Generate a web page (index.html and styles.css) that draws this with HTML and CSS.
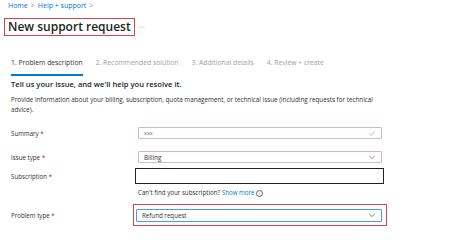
FILE: index.html
```html
<!DOCTYPE html>
<html lang="en">
<head>
    <meta charset="UTF-8">
    <meta name="viewport" content="width=device-width, initial-scale=1.0">
    <title>New support request</title>
    <link rel="stylesheet" href="styles.css">
</head>
<body>
    <nav class="breadcrumb">
        <a href="#">Home</a>
        <span class="sep">&gt;</span>
        <a href="#">Help + support</a>
        <span class="sep">&gt;</span>
    </nav>

    <div class="title-row">
        <h1 class="page-title">New support request</h1>
        <span class="more">&middot;&middot;&middot;</span>
    </div>

    <div class="tabs">
        <div class="tab active">1. Problem description</div>
        <div class="tab">2. Recommended solution</div>
        <div class="tab">3. Additional details</div>
        <div class="tab">4. Review + create</div>
    </div>

    <h2 class="intro-title">Tell us your issue, and we'll help you resolve it.</h2>
    <p class="intro-text">Provide information about your billing, subscription, quota management, or technical issue (including requests for technical advice).</p>

    <div class="form">
        <div class="form-row row-summary">
            <label>Summary <span class="req">*</span></label>
            <div class="field filled">
                <span class="value small">xxx</span>
                <svg class="icon" viewBox="0 0 10 10" width="8" height="8"><path d="M1.5 5.5 L4 8 L8.5 2.5" fill="none" stroke="#8cc08c" stroke-width="1"/></svg>
            </div>
        </div>
        <div class="form-row row-issue">
            <label>Issue type <span class="req">*</span></label>
            <div class="field filled">
                <span class="value">Billing</span>
                <svg class="icon" viewBox="0 0 10 10" width="8" height="8"><path d="M1.5 3.5 L5 7 L8.5 3.5" fill="none" stroke="#666" stroke-width="0.9"/></svg>
            </div>
        </div>
        <div class="form-row row-sub">
            <label>Subscription <span class="req">*</span></label>
            <div class="field focus"></div>
        </div>
        <div class="help-line">Can't find your subscription? <a href="#">Show more</a> <span class="info">i</span></div>
        <div class="form-row row-problem">
            <label>Problem type <span class="req">*</span></label>
            <div class="highlight">
                <div class="field active">
                    <span class="value">Refund request</span>
                    <svg class="icon" viewBox="0 0 10 10" width="8" height="8"><path d="M1.5 3.5 L5 7 L8.5 3.5" fill="none" stroke="#444" stroke-width="0.9"/></svg>
                </div>
            </div>
        </div>
    </div>
</body>
</html>
```

FILE: styles.css
```css
body {
    margin: 0;
    font-family: "Open Sans", "Noto Sans", sans-serif;
    color: #323130;
    background: #fff;
}

a {
    color: #0078d4;
    text-decoration: none;
}

.breadcrumb {
    padding: 1px 8px 0;
    font-size: 7px;
    line-height: 10px;
    display: flex;
    gap: 3px;
}

.breadcrumb .sep {
    color: #8a8886;
}

.title-row {
    display: flex;
    align-items: center;
    margin-top: 7px;
    padding-left: 4px;
}

.page-title {
    margin: 0;
    font-size: 12px;
    font-weight: 600;
    line-height: 16px;
    padding: 0 3px 0 3px;
    border: 1px solid #d9434b;
    color: #201f1e;
}

.more {
    margin-left: 4px;
    font-size: 7px;
    color: #8a8886;
    letter-spacing: 0.3px;
}

.tabs {
    display: flex;
    gap: 13px;
    margin-top: 22px;
    padding-left: 11px;
    font-size: 6.8px;
}

.tab {
    color: #a19f9d;
    padding-bottom: 7px;
    border-bottom: 2px solid transparent;
}

.tab.active {
    color: #323130;
    border-bottom-color: #0078d4;
}

.intro-title {
    margin: 3px 0 0 11px;
    font-size: 7.6px;
    font-weight: 600;
    color: #201f1e;
}

.intro-text {
    margin: 6px 0 0 11px;
    width: 362px;
    font-size: 6.3px;
    line-height: 10px;
}

.form {
    margin-top: 12px;
}

.form-row {
    display: grid;
    grid-template-columns: 126px 245px;
    align-items: center;
    padding-left: 11px;
}

.form-row label {
    font-size: 6.2px;
}

.req {
    color: #a4262c;
}

.field {
    height: 10px;
    border: 1px solid #d5b4dc;
    border-radius: 1px;
    display: flex;
    align-items: center;
    justify-content: space-between;
    padding: 0 5px 0 5px;
    font-size: 6.2px;
    margin-left: 1px;
}

.value.small {
    font-size: 5.5px;
    color: #605e5c;
}

.row-issue {
    margin-top: 12px;
}

.row-sub {
    margin-top: 5px;
}

.field.focus {
    height: 14px;
    border: 1.5px solid #252423;
    border-radius: 0;
    margin-left: -2px;
    margin-right: -2px;
}

.help-line {
    margin: 4px 0 0 138px;
    font-size: 6.2px;
}

.info {
    display: inline-block;
    width: 5px;
    height: 5px;
    border: 0.5px solid #605e5c;
    border-radius: 50%;
    font-size: 4px;
    line-height: 5px;
    text-align: center;
    color: #605e5c;
    vertical-align: middle;
}

.row-problem {
    margin-top: 7px;
}

.highlight {
    border: 1.5px solid #d9434b;
    padding: 3.5px 4px 3.5px 2px;
    margin-left: -4px;
    margin-right: -5px;
}

.field.active {
    height: 11px;
    border-color: #4a9ae0;
    margin-left: 0;
}
```
